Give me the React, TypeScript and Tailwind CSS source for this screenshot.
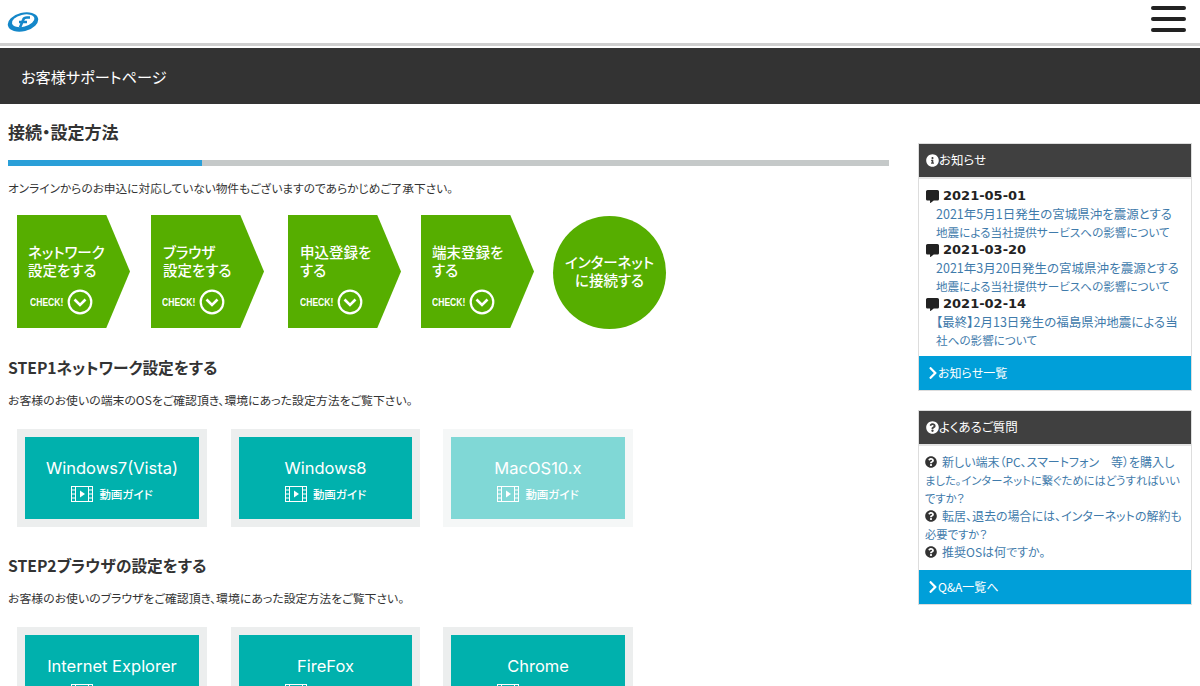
import { FaChevronRight, FaCommentAlt, FaInfoCircle, FaQuestionCircle } from "react-icons/fa";

const font = "font-['Noto_Sans_CJK_JP','Noto_Sans',sans-serif] [font-feature-settings:'palt']";

const steps = [
  { lines: ["ネットワーク", "設定をする"], ml: "ml-[9px]", pad: "pl-[11px]", checkMl: "ml-[2px]" },
  { lines: ["ブラウザ", "設定をする"], ml: "ml-[21px]", pad: "pl-3", checkMl: "-ml-px" },
  { lines: ["申込登録を", "する"], ml: "ml-6", pad: "pl-3", checkMl: "" },
  { lines: ["端末登録を", "する"], ml: "ml-5", pad: "pl-[11px]", checkMl: "" },
];

const network = [
  { label: "Windows7(Vista)", w: "w-[190px]", ml: "ml-[9px]" },
  { label: "Windows8", w: "w-[189px]", ml: "ml-6" },
  { label: "MacOS10.x", w: "w-[190px]", ml: "ml-[23px]", dim: true },
];

const browsers = [
  { label: "Internet Explorer", w: "w-[190px]", ml: "ml-[9px]" },
  { label: "FireFox", w: "w-[189px]", ml: "ml-6" },
  { label: "Chrome", w: "w-[190px]", ml: "ml-[23px]" },
];

const news = [
  { date: "2021-05-01", lines: ["2021年5月1日発生の宮城県沖を震源とする", "地震による当社提供サービスへの影響について"] },
  { date: "2021-03-20", lines: ["2021年3月20日発生の宮城県沖を震源とする", "地震による当社提供サービスへの影響について"] },
  { date: "2021-02-14", lines: ["【最終】2月13日発生の福島県沖地震による当", "社への影響について"] },
];

const faq = [
  ["新しい端末（PC、スマートフォン　等）を購入し", "ました。インターネットに繋ぐためにはどうすればいい", "ですか？"],
  ["転居、退去の場合には、インターネットの解約も", "必要ですか？"],
  ["推奨OSは何ですか。"],
];

function Logo() {
  return (
    <svg width="32" height="22" viewBox="0 0 32 22" className="mt-[11px] ml-[7px]">
      <g transform="rotate(-14 16 11)">
        <ellipse cx="16" cy="11" rx="15.5" ry="9.2" fill="#1487c9" />
        <ellipse cx="16.5" cy="9.8" rx="11.5" ry="6" fill="#fff" />
      </g>
      <path d="M13 16.5 L16.3 8.5 Q17 6.5 20 6.5 L23 6.5 M12 11 L20 11" stroke="#1487c9" strokeWidth="2.6" fill="none" />
    </svg>
  );
}

function CheckIcon() {
  return (
    <svg width="26" height="26" viewBox="0 0 26 26" fill="none" stroke="#fff">
      <circle cx="13" cy="13" r="11.3" strokeWidth="2.2" />
      <path d="M7.5 10.5 L13 16 L18.5 10.5" strokeWidth="2.6" />
    </svg>
  );
}

function FilmIcon() {
  return (
    <svg width="22" height="16" viewBox="0 0 22 16" fill="none" stroke="#fff" strokeWidth="1">
      <rect x="0.5" y="0.5" width="21" height="15" />
      <path d="M4.5 0.5 V15.5 M17.5 0.5 V15.5 M0.5 4 H4.5 M0.5 8 H4.5 M0.5 12 H4.5 M17.5 4 H21.5 M17.5 8 H21.5 M17.5 12 H21.5" />
      <path d="M9 4.5 L14 8 L9 11.5 Z" fill="#fff" stroke="none" />
    </svg>
  );
}

function Arrow({ lines, ml, pad, checkMl }: { lines: string[]; ml: string; pad: string; checkMl: string }) {
  return (
    <div className={`${ml} ${pad} h-[113px] w-[113px] shrink-0 bg-[#56ae00] pt-[28px] text-white [clip-path:polygon(0_0,79%_0,100%_50%,79%_100%,0_100%)]`}>
      <div className="text-[14.5px] leading-[18px] font-medium">
        {lines.map((l) => (
          <div key={l}>{l}</div>
        ))}
      </div>
      <div className={`${checkMl} mt-[10px] flex items-center`}>
        <span className="w-[37px] origin-left scale-x-[0.78] font-['Liberation_Sans',sans-serif] text-[11px] font-bold">CHECK!</span>
        <CheckIcon />
      </div>
    </div>
  );
}

function GuideCard({ label, w, ml, dim }: { label: string; w: string; ml: string; dim?: boolean }) {
  return (
    <div className={`${ml} ${w} h-[98px] shrink-0 p-2 ${dim ? "bg-[#f5f7f7]" : "bg-[#eceeee]"}`}>
      <div className={`flex h-[82px] flex-col items-center pt-[18px] text-white ${dim ? "bg-[#80d8d6]" : "bg-[#00b1ad]"}`}>
        <div className="font-['Inter',sans-serif] text-[16.5px] leading-[26px]">{label}</div>
        <div className="mt-[5px] flex items-center gap-[6px] text-[11.5px] leading-4 font-medium">
          <FilmIcon />
          動画ガイド
        </div>
      </div>
    </div>
  );
}

function SideBox({ icon, title, footer, children }: { icon: React.ReactNode; title: string; footer: string; children: React.ReactNode }) {
  return (
    <section className="border border-[#dddddd] bg-white">
      <h3 className="flex h-[33px] items-center bg-[#404040] pl-[7px] text-[12.5px] font-normal text-white">
        {icon}
        {title}
      </h3>
      <div className="border-t-2 border-[#e4e4e4]">{children}</div>
      <a className="flex h-[34px] items-center bg-[#009fd9] pl-[8px] text-[12px] text-white">
        <FaChevronRight className="-mr-[2px] -ml-px text-[14px]" />
        {footer}
      </a>
    </section>
  );
}

export default function App() {
  return (
    <div className={`${font} h-[686px] w-[1200px] overflow-hidden bg-white text-[#333]`}>
      <header className="flex h-[43px] items-start justify-between">
        <Logo />
        <div className="mt-[6px] mr-[14px] flex w-[35px] flex-col gap-[7px]">
          <span className="h-1 rounded-full bg-[#222]" />
          <span className="h-1 rounded-full bg-[#222]" />
          <span className="h-1 rounded-full bg-[#222]" />
        </div>
      </header>
      <div className="h-[3px] bg-[#cfcfcf]" />
      <div className="mt-[2px] flex h-[56px] items-center bg-[#333] pl-[21px] text-[15.2px] text-white">お客様サポートページ</div>

      <div className="flex">
        <main className="w-[918px] shrink-0 pl-2">
          <h1 className="mt-4 text-[17px] leading-6 font-bold">接続・設定方法</h1>
          <div className="mt-4 flex h-[6px] w-[881px] bg-[#c5c9c9]">
            <div className="w-[194px] bg-[#2a9fd8]" />
          </div>
          <p className="mt-[13px] text-[11.7px] leading-[18px]">オンラインからのお申込に対応していない物件もございますのであらかじめご了承下さい。</p>

          <div className="mt-[18px] flex">
            {steps.map((s) => (
              <Arrow key={s.lines[0]} {...s} />
            ))}
            <div className="mt-px ml-[19px] flex h-[113px] w-[113px] shrink-0 items-center justify-center rounded-full bg-[#56ae00] pb-[3px] text-center text-[14.5px] leading-[18px] font-medium text-white">
              インターネット<br />に接続する
            </div>
          </div>

          <h2 className="mt-[27px] text-[15.7px] leading-6 font-bold">STEP1ネットワーク設定をする</h2>
          <p className="mt-[11px] text-[11.9px] leading-[18px]">お客様のお使いの端末のOSをご確認頂き、環境にあった設定方法をご覧下さい。</p>
          <div className="mt-5 flex">
            {network.map((c) => (
              <GuideCard key={c.label} {...c} />
            ))}
          </div>

          <h2 className="mt-[27px] text-[15.7px] leading-6 font-bold">STEP2ブラウザの設定をする</h2>
          <p className="mt-[11px] text-[11.9px] leading-[18px]">お客様のお使いのブラウザをご確認頂き、環境にあった設定方法をご覧下さい。</p>
          <div className="mt-5 flex">
            {browsers.map((c) => (
              <GuideCard key={c.label} {...c} />
            ))}
          </div>
        </main>

        <aside className="mt-[39px] flex w-[274px] shrink-0 flex-col gap-[19px]">
          <SideBox icon={<FaInfoCircle className="text-[13px]" />} title="お知らせ" footer="お知らせ一覧">
            <div className="h-[177px] px-[7px] pt-[8px]">
              {news.map((n) => (
                <div key={n.date}>
                  <div className="flex h-[18px] items-center gap-[4px] text-[#222]">
                    <FaCommentAlt className="text-[13px]" />
                    <span className="font-['DejaVu_Sans',sans-serif] text-[13px] font-bold">{n.date}</span>
                  </div>
                  <a className="block pl-[10px] text-[12.5px] leading-[18px] whitespace-nowrap text-[#3f7bab]">
                    {n.lines.map((l) => (
                      <div key={l} className="even:text-[11.6px]">{l}</div>
                    ))}
                  </a>
                </div>
              ))}
            </div>
          </SideBox>
          <SideBox icon={<FaQuestionCircle className="text-[13px]" />} title="よくあるご質問" footer="Q&A一覧へ">
            <div className="h-[124px] px-[6px] pt-[7px] text-[12px] leading-[18px] whitespace-nowrap text-[#3f7bab]">
              {faq.map((q) => (
                <div key={q[0]}>
                  <FaQuestionCircle className="mr-[5px] inline align-[-1px] text-[12px] text-[#333]" />
                  {q.map((l, i) =>
                    i === 0 ? (
                      <span key={l}>{l}</span>
                    ) : (
                      <div key={l} className="text-[11.3px]">{l}</div>
                    ),
                  )}
                </div>
              ))}
            </div>
          </SideBox>
        </aside>
      </div>
    </div>
  );
}
